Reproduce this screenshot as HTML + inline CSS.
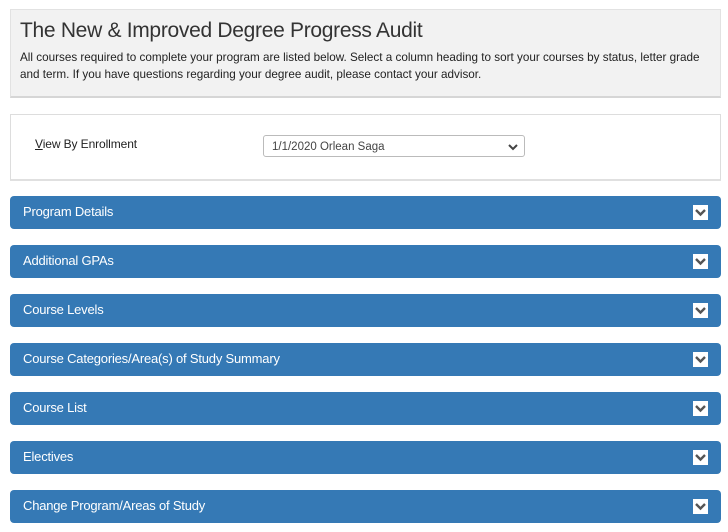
<!DOCTYPE html>
<html><head><style>
body{margin:0;background:#fff;font-family:"Liberation Sans",sans-serif;width:728px;height:532px;overflow:hidden;position:relative}
.hdr{position:absolute;left:10px;top:9px;width:709px;height:86px;background:#f2f2f2;border:1px solid #e2e2e2;border-bottom:2px solid #d6d6d6}
.hdr h1{margin:0;position:absolute;left:9px;top:9px;font-weight:normal;font-size:21px;color:#333;letter-spacing:-0.3px}
.hdr p{margin:0;position:absolute;left:9px;top:40px;width:692px;font-size:11.7px;line-height:16.5px;color:#222}
.box{position:absolute;left:10px;top:114px;width:709px;height:64px;border:1px solid #ddd;border-bottom:2px solid #e0e0e0;background:#fff}
.lbl{position:absolute;left:24px;top:22px;font-size:12px;color:#222;letter-spacing:-0.1px}
.sel{position:absolute;left:252px;top:20px;height:22px;border:1px solid #bbb;border-radius:3px;font-size:11.5px;color:#444;line-height:22px;padding-left:8px;box-sizing:border-box;width:262px}
.sel svg{position:absolute;right:6px;top:7px}
.bar{position:absolute;left:10px;width:711px;height:33px;background:#3579b5;border-radius:4px;color:#fff;font-size:13px;line-height:32px;box-sizing:border-box;padding-left:13px;letter-spacing:-0.2px}
.ic{position:absolute;left:683px;top:9px;width:15px;height:15px;background:#fff}
.ic svg{position:absolute;left:2px;top:3px}
</style></head><body>
<div class="hdr"><h1>The New &amp; Improved Degree Progress Audit</h1>
<p>All courses required to complete your program are listed below. Select a column heading to sort your courses by status, letter grade and term. If you have questions regarding your degree audit, please contact your advisor.</p></div>
<div class="box"><div class="lbl"><u>V</u>iew By Enrollment</div>
<div class="sel">1/1/2020 Orlean Saga<svg width="10" height="8" viewBox="0 0 10 8"><path d="M1 2l4 4 4-4" stroke="#444" stroke-width="2" fill="none"/></svg></div></div>
<div class="bar" style="top:196px">Program Details<div class="ic"><svg width="11" height="9" viewBox="0 0 11 9"><path d="M1 2l4.5 4.5L10 2" stroke="#555" stroke-width="2.4" fill="none"/></svg></div></div>
<div class="bar" style="top:245px">Additional GPAs<div class="ic"><svg width="11" height="9" viewBox="0 0 11 9"><path d="M1 2l4.5 4.5L10 2" stroke="#555" stroke-width="2.4" fill="none"/></svg></div></div>
<div class="bar" style="top:294px">Course Levels<div class="ic"><svg width="11" height="9" viewBox="0 0 11 9"><path d="M1 2l4.5 4.5L10 2" stroke="#555" stroke-width="2.4" fill="none"/></svg></div></div>
<div class="bar" style="top:343px">Course Categories/Area(s) of Study Summary<div class="ic"><svg width="11" height="9" viewBox="0 0 11 9"><path d="M1 2l4.5 4.5L10 2" stroke="#555" stroke-width="2.4" fill="none"/></svg></div></div>
<div class="bar" style="top:392px">Course List<div class="ic"><svg width="11" height="9" viewBox="0 0 11 9"><path d="M1 2l4.5 4.5L10 2" stroke="#555" stroke-width="2.4" fill="none"/></svg></div></div>
<div class="bar" style="top:441px">Electives<div class="ic"><svg width="11" height="9" viewBox="0 0 11 9"><path d="M1 2l4.5 4.5L10 2" stroke="#555" stroke-width="2.4" fill="none"/></svg></div></div>
<div class="bar" style="top:490px">Change Program/Areas of Study<div class="ic"><svg width="11" height="9" viewBox="0 0 11 9"><path d="M1 2l4.5 4.5L10 2" stroke="#555" stroke-width="2.4" fill="none"/></svg></div></div>
</body></html>
